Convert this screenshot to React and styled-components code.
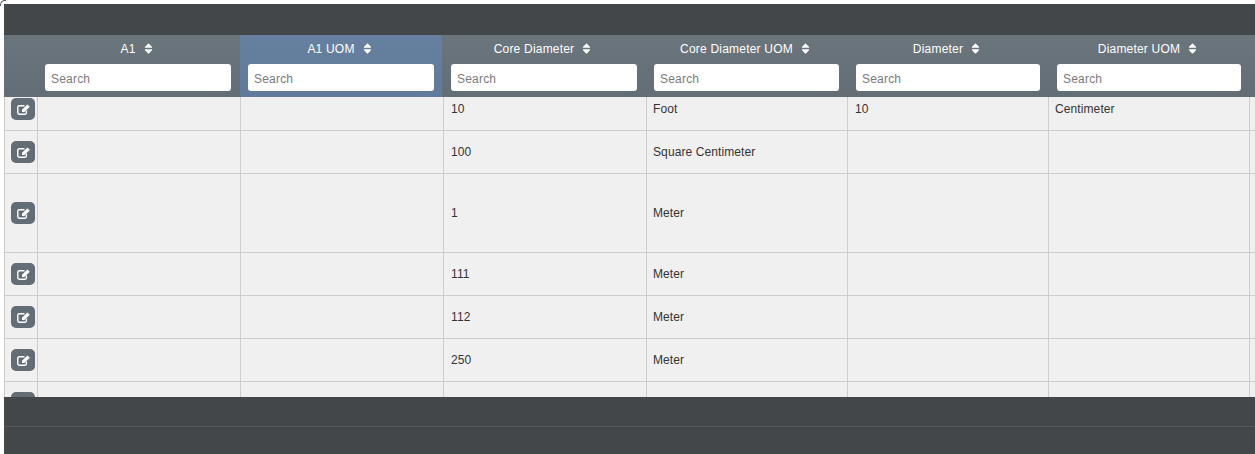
import React from 'react';
import styled, { createGlobalStyle } from 'styled-components';
import { FaSort } from 'react-icons/fa';

const Global = createGlobalStyle`
  html, body {
    margin: 0;
    padding: 0;
    background: #fff;
  }
  body {
    font-family: "Liberation Sans", Arial, sans-serif;
    font-size: 12px;
    color: #333;
  }
`;

const Page = styled.div`
  position: relative;
  width: 1255px;
  height: 454px;
  padding: 4px 0 0 4px;
  box-sizing: border-box;
  overflow: hidden;
  display: flex;
  flex-direction: column;
`;

const WindowCorner = styled.div`
  position: absolute;
  top: 0;
  left: 0;
  width: 6px;
  height: 6px;
  box-sizing: border-box;
  border-top: 1px solid #555;
  border-left: 1px solid #555;
  border-top-left-radius: 5px;
`;

const TopBar = styled.div`
  height: 31px;
  flex: none;
  background: #43474a;
`;

const GridHead = styled.div`
  display: flex;
  height: 62px;
  flex: none;
  background: linear-gradient(#6b757c, #636d75);
`;

const HeadSpacer = styled.div`
  width: 33px;
  flex: none;
`;

const HeadCell = styled.div`
  width: ${props => props.$width}px;
  flex: none;
  box-sizing: border-box;
  padding: 0 ${props => props.$padRight}px 6px ${props => props.$padLeft}px;
  background: ${props => (props.$active ? 'linear-gradient(#67809f, #5f7a9c)' : 'none')};
`;

const HeadLabel = styled.div`
  height: 27px;
  margin: 0 3px 2px 0;
  display: flex;
  align-items: center;
  justify-content: center;
  gap: 8px;
  color: #fff;
  font-size: 12px;
  letter-spacing: 0.2px;
  svg {
    width: 9px;
    height: 13px;
  }
`;

const Search = styled.input`
  display: block;
  width: 100%;
  height: 27px;
  box-sizing: border-box;
  border: 0;
  border-radius: 3px;
  padding: 2px 6px 0;
  background: #fff;
  font: 12px "Liberation Sans", Arial, sans-serif;
  letter-spacing: 0.2px;
  &::placeholder {
    color: #7b7b7b;
    opacity: 1;
  }
`;

const GridBody = styled.div`
  height: 300px;
  flex: none;
  overflow: hidden;
  background: #f0f0f0;
`;

const Row = styled.div`
  display: flex;
  height: ${props => props.$height}px;
  box-sizing: border-box;
  border-bottom: 1px solid #ccc;
`;

const Cell = styled.div`
  width: ${props => props.$width}px;
  flex: none;
  box-sizing: border-box;
  padding: ${props => (props.$top ? '5px' : '0')} 6px 0 ${props => (props.$numeric ? '7px' : '6px')};
  display: flex;
  align-items: ${props => (props.$top ? 'flex-start' : 'center')};
  border-right: 1px solid #ccc;
  letter-spacing: 0.1px;
`;

const ActionCell = styled.div`
  width: 34px;
  flex: none;
  box-sizing: border-box;
  border-left: 1px solid #ccc;
  border-right: 1px solid #ccc;
  padding: ${props => (props.$top ? '1px' : '0')} 0 0 6px;
  display: flex;
  align-items: ${props => (props.$top ? 'flex-start' : 'center')};
`;

const EditButton = styled.button`
  width: 24px;
  height: 22px;
  padding: 0;
  border: 0;
  border-radius: 5px;
  background: #636d75;
  display: flex;
  align-items: center;
  justify-content: center;
`;

const EditIcon = () => (
  <svg width="13" height="11" viewBox="0 0 13 11">
    <path
      d="M7.5 1.8H2.2Q.8 1.8.8 3.2V8.8Q.8 10.2 2.2 10.2H8Q9.4 10.2 9.4 8.8V6.6"
      fill="none"
      stroke="#fff"
      strokeWidth="1.4"
    />
    <path d="M10.4.4 12.8 2.7 7.4 8.1H5V5.8Z" fill="#fff" />
  </svg>
);

const Footer = styled.div`
  flex: 1;
  background: #43474a;
`;

const FooterRow = styled.div`
  height: 30px;
  box-sizing: border-box;
  border-bottom: 1px solid #55595c;
`;

// head cells do not line up exactly with the body columns in the original
const columns = [
  { title: 'A1', width: 203, headWidth: 203, padLeft: 8, padRight: 9 },
  { title: 'A1 UOM', width: 203, headWidth: 202, padLeft: 8, padRight: 8, active: true },
  { title: 'Core Diameter', width: 203, headWidth: 204, padLeft: 9, padRight: 9, numeric: true },
  { title: 'Core Diameter UOM', width: 201, headWidth: 202, padLeft: 8, padRight: 9 },
  { title: 'Diameter', width: 201, headWidth: 201, padLeft: 8, padRight: 9, numeric: true },
  { title: 'Diameter UOM', width: 201, headWidth: 201, padLeft: 8, padRight: 9 },
];

const rows = [
  { height: 34, top: true, values: ['', '', '10', 'Foot', '10', 'Centimeter'] },
  { height: 43, values: ['', '', '100', 'Square Centimeter', '', ''] },
  { height: 79, values: ['', '', '1', 'Meter', '', ''] },
  { height: 43, values: ['', '', '111', 'Meter', '', ''] },
  { height: 43, values: ['', '', '112', 'Meter', '', ''] },
  { height: 43, values: ['', '', '250', 'Meter', '', ''] },
  { height: 43, values: ['', '', '', '', '', ''] },
];

const App = () => (
  <Page>
    <Global />
    <WindowCorner />
    <TopBar />
    <GridHead>
      <HeadSpacer />
      {columns.map(col => (
        <HeadCell
          key={col.title}
          $width={col.headWidth}
          $padLeft={col.padLeft}
          $padRight={col.padRight}
          $active={col.active}
        >
          <HeadLabel>
            {col.title}
            <FaSort />
          </HeadLabel>
          <Search placeholder="Search" />
        </HeadCell>
      ))}
    </GridHead>
    <GridBody>
      {rows.map((row, i) => (
        <Row key={i} $height={row.height}>
          <ActionCell $top={row.top}>
            <EditButton>
              <EditIcon />
            </EditButton>
          </ActionCell>
          {row.values.map((value, j) => (
            <Cell key={j} $width={columns[j].width} $top={row.top} $numeric={columns[j].numeric}>
              {value}
            </Cell>
          ))}
        </Row>
      ))}
    </GridBody>
    <Footer>
      <FooterRow />
    </Footer>
  </Page>
);

export default App;
